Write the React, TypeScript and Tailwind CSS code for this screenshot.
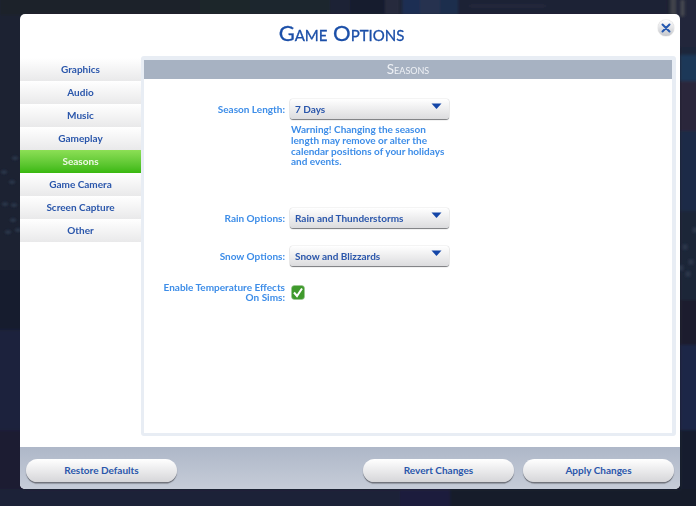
import React from "react";

const font = { fontFamily: 'Lato, "Open Sans", sans-serif' };
const tabs = ["Graphics", "Audio", "Music", "Gameplay", "Seasons", "Game Camera", "Screen Capture", "Other"];

const flowers: [number, number][] = [
  [15, 158], [4, 172], [12, 182], [5, 204], [14, 205], [13, 220], [8, 232], [18, 230],
];
const flowersR: [number, number][] = [
  [685, 247], [681, 268], [691, 262], [688, 274], [695, 230],
];

function Backdrop() {
  return (
    <svg className="absolute inset-0" width="696" height="506" viewBox="0 0 696 506">
      <defs>
        <filter id="b" x="-20%" y="-20%" width="140%" height="140%"><feGaussianBlur stdDeviation="1.6" /></filter>
        <filter id="c" x="-50%" y="-50%" width="200%" height="200%"><feGaussianBlur stdDeviation="0.8" /></filter>
      </defs>
      <rect width="696" height="506" fill="#1b1f2e" />
      <g filter="url(#b)">
        <rect x="-5" y="-5" width="30" height="155" fill="#1b2430" />
        <rect x="-5" y="150" width="30" height="120" fill="#1a2430" />
        <rect x="-5" y="270" width="30" height="60" fill="#171b2d" />
        <rect x="-5" y="330" width="30" height="100" fill="#1b223c" />
        <rect x="-5" y="430" width="30" height="80" fill="#1f1e31" />
        <rect x="0" y="-5" width="150" height="20" fill="#1c222c" />
        <rect x="150" y="-5" width="50" height="20" fill="#1e242c" />
        <rect x="200" y="-5" width="50" height="20" fill="#1b282c" />
        <rect x="250" y="-5" width="80" height="20" fill="#1c272e" />
        <rect x="330" y="-5" width="20" height="20" fill="#1b2036" />
        <rect x="350" y="-5" width="35" height="20" fill="#171a2e" />
        <rect x="385" y="-5" width="15" height="20" fill="#272a3c" />
        <rect x="402" y="-5" width="18" height="20" fill="#1b2f52" />
        <rect x="420" y="-5" width="20" height="20" fill="#283350" />
        <rect x="440" y="-5" width="18" height="20" fill="#1a2d4e" />
        <rect x="458" y="-5" width="210" height="20" fill="#1e2236" />
        <rect x="470" y="5" width="75" height="2" fill="#262a40" />
        <rect x="670" y="-5" width="6" height="20" fill="#3f424c" />
        <rect x="676" y="-5" width="25" height="52" fill="#23253a" />
        <rect x="681" y="0" width="3" height="16" fill="#4c4d55" />
        <rect x="680" y="47" width="20" height="8" fill="#1f253a" />
        <rect x="680" y="55" width="20" height="26" fill="#1d3758" />
        <rect x="680" y="81" width="20" height="50" fill="#29283b" />
        <rect x="680" y="131" width="20" height="80" fill="#1e2947" />
        <rect x="680" y="211" width="20" height="90" fill="#1c2838" />
        <rect x="680" y="300" width="20" height="45" fill="#1f1f2d" />
        <rect x="680" y="345" width="20" height="85" fill="#1f2546" />
        <rect x="680" y="430" width="20" height="80" fill="#171d2f" />
        <rect x="-5" y="489" width="405" height="20" fill="#1f2037" />
        <rect x="400" y="489" width="50" height="20" fill="#1a1f3c" />
        <rect x="450" y="489" width="250" height="20" fill="#151c2b" />
      </g>
      <g fill="#2a3549" filter="url(#c)">
        {flowers.map(([x, y]) => (
          <ellipse key={`${x}-${y}`} cx={x} cy={y} rx="3" ry="2" />
        ))}
        {flowersR.map(([x, y]) => (
          <ellipse key={`${x}-${y}`} cx={x} cy={y} rx="3" ry="3" />
        ))}
      </g>
    </svg>
  );
}

function Select({ value }: { value: string }) {
  return (
    <div className="flex h-[20px] w-[159px] items-center justify-between rounded-[3px] bg-gradient-to-b from-white to-[#dcdcde] pl-[5px] pr-[7px] shadow-[0_1px_1px_#77787c,0_0_1px_#8c8d92]">
      <span className="text-[10px] font-bold text-[#2a56ab]">{value}</span>
      <svg width="11" height="7" viewBox="0 0 11 7" className="mb-[5px]">
        <path d="M0.5 0.5H10.5L5.5 6Z" fill="#1446a8" />
      </svg>
    </div>
  );
}

function Label({ children }: { children: React.ReactNode }) {
  return <span className="w-[146px] pr-[5px] text-right text-[10px] font-bold text-[#3d8de8]">{children}</span>;
}

function Pill({ label }: { label: string }) {
  return (
    <div className="flex h-[23px] w-[151px] items-center justify-center rounded-[12px] bg-gradient-to-b from-white to-[#d6d6d9] text-[10px] font-bold text-[#2a56ab] shadow-[0_1.5px_1px_#6d7078]">
      {label}
    </div>
  );
}

export default function App() {
  return (
    <div className="relative h-[506px] w-[696px] overflow-hidden" style={font}>
      <Backdrop />
      <div className="relative pl-[20px] pt-[14px] blur-[0.35px]">
        <div className="relative flex h-[475px] w-[660px] flex-col overflow-hidden rounded-[5px] bg-white">
          <div className="flex h-[42px] shrink-0 items-center justify-center pb-[5px] pr-[17px] text-[22px] leading-none text-[#1b4fa8] [-webkit-text-stroke:0.3px_#1b4fa8] [font-variant:small-caps]">
            Game Options
          </div>
          <div className="flex min-h-0 flex-1 pb-[11px] pr-[4px]">
            <nav className="flex w-[121px] shrink-0 flex-col pt-[2px]">
              {tabs.map((t) =>
                t === "Seasons" ? (
                  <div key={t} className="flex h-[23px] items-center justify-center bg-gradient-to-b from-[#8cdf55] to-[#38b80c] text-[10px] font-bold text-[#eef9e6]">
                    {t}
                  </div>
                ) : (
                  <div key={t} className="flex h-[23px] items-center justify-center bg-gradient-to-b from-white to-[#e9e9ea] text-[10px] font-bold text-[#2a56ab]">
                    {t}
                  </div>
                )
              )}
            </nav>
            <main className="flex min-w-0 flex-1 flex-col rounded-[3px] border-[3px] border-t-[4px] border-r-[4px] border-[#e8edf4] bg-white">
              <div className="flex h-[19px] shrink-0 items-center justify-center bg-[#a7b2c2] text-[13.5px] leading-none text-[#eef1f5] [font-variant:small-caps]">
                Seasons
              </div>
              <div className="flex flex-col pt-[20px]">
                <div className="flex items-center">
                  <Label>Season Length:</Label>
                  <Select value="7 Days" />
                </div>
                <p className="ml-[147px] mt-[5px] w-[165px] text-[10px] font-bold leading-[10.8px] text-[#3d8de8]">
                  Warning! Changing the season length may remove or alter the calendar positions of your holidays and events.
                </p>
                <div className="mt-[41px] flex items-center">
                  <Label>Rain Options:</Label>
                  <Select value="Rain and Thunderstorms" />
                </div>
                <div className="mt-[18px] flex items-center">
                  <Label>Snow Options:</Label>
                  <Select value="Snow and Blizzards" />
                </div>
                <div className="mt-[16px] flex items-center">
                  <span className="w-[147px] pr-[6px] text-right text-[10px] font-bold leading-[10px] text-[#3d8de8]">
                    Enable Temperature Effects<br />On Sims:
                  </span>
                  <svg width="14" height="15" viewBox="0 0 14 15">
                    <rect x="0.5" y="0.5" width="13" height="14" rx="3" fill="#3f9a2c" stroke="#9cc793" strokeWidth="0.6" />
                    <path d="M3 7.5L6 11L11 3.5" fill="none" stroke="#ffffff" strokeWidth="2" />
                  </svg>
                </div>
              </div>
            </main>
          </div>
          <footer className="flex h-[42px] shrink-0 justify-between bg-gradient-to-b from-[#aeb7c8] to-[#c6ccd8] pl-[6px] pr-[6px] pt-[12px]">
            <Pill label="Restore Defaults" />
            <div className="flex gap-[9px]">
              <Pill label="Revert Changes" />
              <Pill label="Apply Changes" />
            </div>
          </footer>
          <div className="absolute right-[6px] top-[6px] flex h-[16px] w-[16px] items-center justify-center rounded-full bg-gradient-to-b from-white to-[#c4c6cc] shadow-[0_0_1px_#888]">
            <svg width="10" height="10" viewBox="0 0 10 10">
              <path d="M1.5 1.5L8.5 8.5M8.5 1.5L1.5 8.5" stroke="#2458b0" strokeWidth="2" strokeLinecap="round" />
            </svg>
          </div>
        </div>
      </div>
    </div>
  );
}
